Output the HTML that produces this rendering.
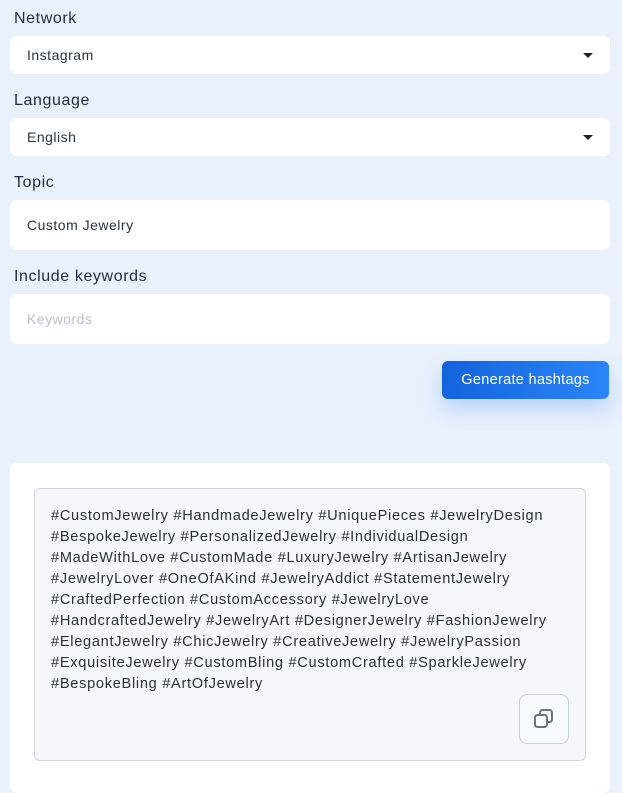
<!DOCTYPE html>
<html><head><style>
body{margin:0;width:622px;height:777px;background:#e9f1fd;font-family:"Liberation Sans",sans-serif;color:#1f2a44;position:relative;overflow:hidden}
.l{position:absolute;left:14px;font-size:16px;color:#1e2b4a;letter-spacing:0.6px}
.f{position:absolute;left:10px;width:600px;background:#fff;border-radius:7px;font-size:14px;color:#2a3142;box-sizing:border-box;padding-left:17px;letter-spacing:0.5px}
.arrow{position:absolute;right:17px;top:50%;margin-top:-2px;border-left:5px solid transparent;border-right:5px solid transparent;border-top:5px solid #222}
.btn{position:absolute;left:442px;top:361px;width:167px;height:38px;border-radius:6px;background:linear-gradient(90deg,#1363dc,#2b85f7);color:#fff;font-size:14.5px;text-align:center;line-height:38px;box-shadow:0 10px 20px rgba(40,120,240,.25);letter-spacing:0.3px}
.card{position:absolute;left:10px;top:463px;width:600px;height:330px;background:#fff;border-radius:7px}
.box{position:absolute;left:34px;top:488px;width:552px;height:273px;box-sizing:border-box;background:#f7f7f9;border:1px solid #d3d4d9;border-radius:6px;padding:17px 0 0 16px;font-size:14.6px;line-height:21px;color:#2b2f38;white-space:nowrap;letter-spacing:0.7px}
.copy{position:absolute;left:519px;top:694px;width:50px;height:50px;box-sizing:border-box;border:1px solid #c9cfdb;border-radius:8px;background:#f9fafc}
</style></head><body>
<div class="l" style="top:10px">Network</div>
<div class="f" style="top:36px;height:38px;line-height:38px">Instagram<span class="arrow"></span></div>
<div class="l" style="top:92px">Language</div>
<div class="f" style="top:118px;height:38px;line-height:38px">English<span class="arrow"></span></div>
<div class="l" style="top:174px">Topic</div>
<div class="f" style="top:200px;height:50px;line-height:50px">Custom Jewelry</div>
<div class="l" style="top:268px">Include keywords</div>
<div class="f" style="top:294px;height:50px;line-height:50px;color:#b9bec9">Keywords</div>
<div class="btn">Generate hashtags</div>
<div class="card"></div>
<div class="box">#CustomJewelry #HandmadeJewelry #UniquePieces #JewelryDesign<br>#BespokeJewelry #PersonalizedJewelry #IndividualDesign<br>#MadeWithLove #CustomMade #LuxuryJewelry #ArtisanJewelry<br>#JewelryLover #OneOfAKind #JewelryAddict #StatementJewelry<br>#CraftedPerfection #CustomAccessory #JewelryLove<br>#HandcraftedJewelry #JewelryArt #DesignerJewelry #FashionJewelry<br>#ElegantJewelry #ChicJewelry #CreativeJewelry #JewelryPassion<br>#ExquisiteJewelry #CustomBling #CustomCrafted #SparkleJewelry<br>#BespokeBling #ArtOfJewelry</div>
<div class="copy"><svg width="50" height="50" viewBox="0 0 50 50" style="position:absolute;left:-1px;top:-1px"><rect x="21" y="16" width="12" height="12" rx="2.5" fill="none" stroke="#6b7280" stroke-width="2"/><rect x="16" y="21" width="12" height="12" rx="2.5" fill="#f9fafc" stroke="#6b7280" stroke-width="2"/></svg></div>
</body></html>
